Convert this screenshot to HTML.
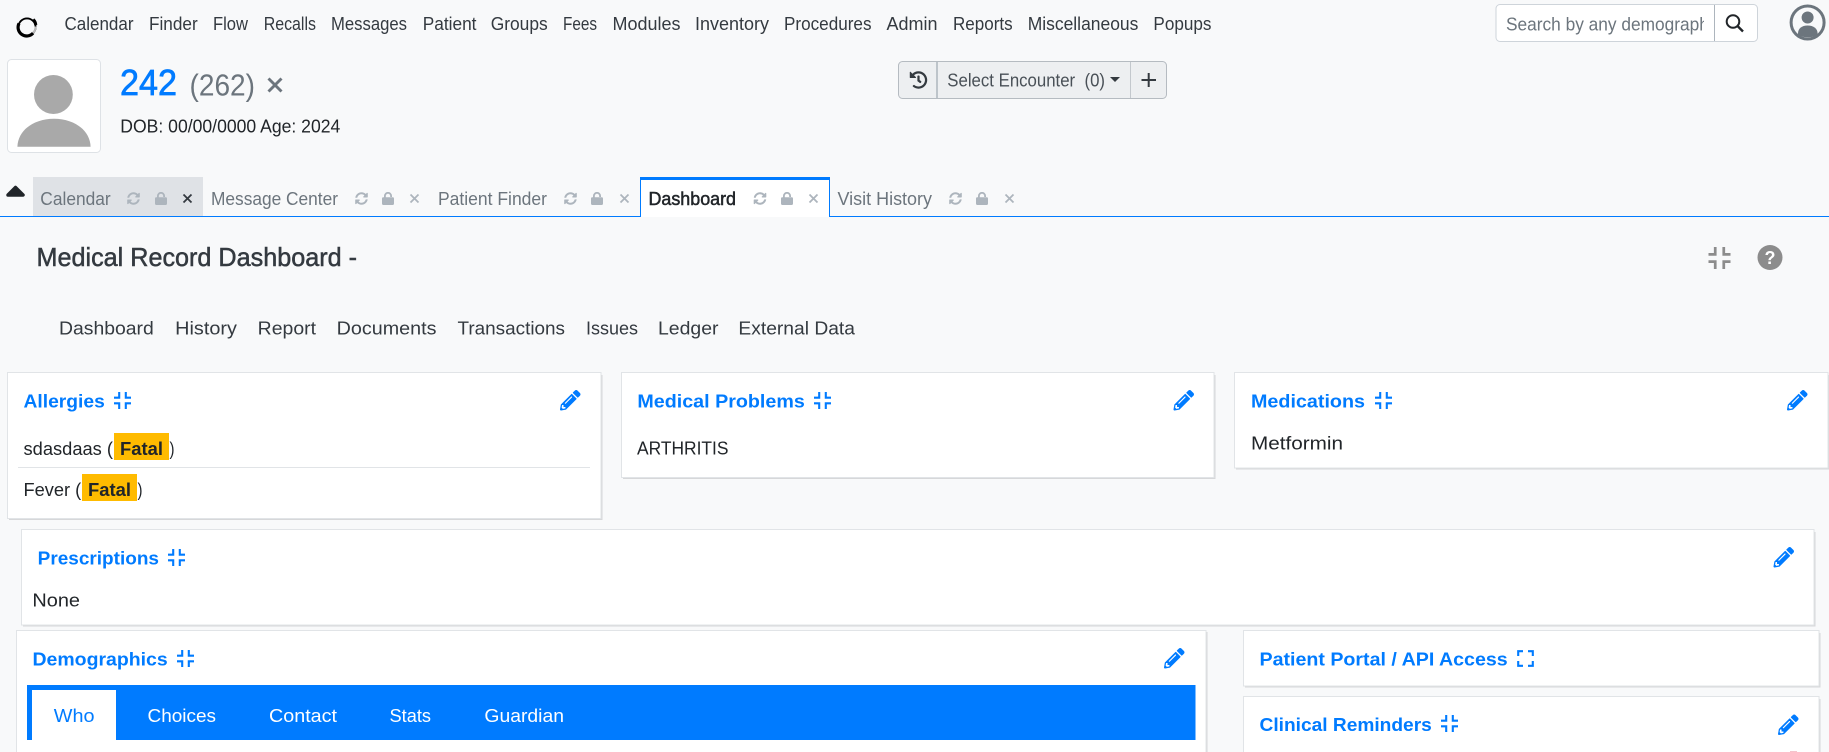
<!DOCTYPE html>
<html lang="en"><head><meta charset="utf-8"><title>Medical Record Dashboard</title>
<style>
html,body{margin:0;padding:0;width:1829px;height:752px;overflow:hidden;background:#f8f9fa}
svg{display:block}
text{font-family:"Liberation Sans",sans-serif;font-size:18.5px;fill:#212529;white-space:pre}
.nav{fill:#343a40}
.tab{fill:#6c757d}
.t{font-weight:bold;fill:#007bff;font-size:18.5px}
.sub{fill:#343a40}
.card{fill:#fff;stroke:#e1e4e7;stroke-width:1}
.sh{fill:#d6d7d9}
.blue{fill:#007bff}
.x{stroke-width:1.8;fill:none;stroke-linecap:butt}
.cmp{fill:none;stroke-width:2.1}
</style></head>
<body>
<svg width="1829" height="752" viewBox="0 0 1829 752" xmlns="http://www.w3.org/2000/svg">
<defs>
<symbol id="pencil" viewBox="0 0 512 512"><path fill="#007bff" d="M497.9 142.1l-46.1 46.1c-4.7 4.7-12.3 4.7-17 0l-111-111c-4.7-4.7-4.7-12.3 0-17l46.1-46.1c18.7-18.7 49.1-18.7 67.9 0l60.1 60.1c18.8 18.7 18.8 49.1 0 67.9zM284.2 99.8L21.6 362.4.4 483.9c-2.9 16.4 11.4 30.6 27.8 27.8l121.5-21.3 262.6-262.6c4.7-4.7 4.7-12.3 0-17l-111-111c-4.8-4.7-12.4-4.7-17.1 0zM124.1 339.9c-5.5-5.5-5.5-14.3 0-19.8l154-154c5.5-5.5 14.3-5.5 19.8 0s5.5 14.3 0 19.8l-154 154c-5.5 5.5-14.3 5.5-19.8 0zM88 424h48v36.3l-64.5 11.3-31.1-31.1L51.7 376H88v48z"/></symbol>
<symbol id="sync" viewBox="0 0 512 512"><path fill="#adb5bd" d="M370.72 133.28C339.458 104.008 298.888 87.962 255.848 88c-77.458.068-144.328 53.178-162.791 126.85-1.344 5.363-6.122 9.15-11.651 9.15H24.103c-7.498 0-13.194-6.807-11.807-14.176C33.933 94.924 134.813 8 256 8c66.448 0 126.791 26.136 171.315 68.685L463.03 40.97C478.149 25.851 504 36.559 504 57.941V192c0 13.255-10.745 24-24 24H345.941c-21.382 0-32.09-25.851-16.971-40.971l41.75-41.749zM32 296h134.059c21.382 0 32.09 25.851 16.971 40.971l-41.75 41.75c31.262 29.273 71.835 45.319 114.876 45.28 77.418-.07 144.315-53.144 162.787-126.849 1.344-5.363 6.122-9.15 11.651-9.15h57.304c7.498 0 13.194 6.807 11.807 14.176C478.067 417.076 377.187 504 256 504c-66.448 0-126.791-26.136-171.315-68.685L48.97 471.03C33.851 486.149 8 475.441 8 454.059V320c0-13.255 10.745-24 24-24z"/></symbol>
<symbol id="lock" viewBox="0 0 12 13"><path fill="#adb5bd" d="M1.200 5.300H10.800A1.200 1.200 0 0 1 12 6.500V11.800A1.200 1.200 0 0 1 10.800 13H1.200A1.200 1.200 0 0 1 0 11.800V6.500A1.200 1.200 0 0 1 1.200 5.300z"/><path d="M2.900 6V3.900a3.100 3.100 0 0 1 6.200 0V5" fill="none" stroke="#adb5bd" stroke-width="1.800"/></symbol>
<symbol id="history" viewBox="0 0 512 512"><path fill="#343a40" d="M504 255.531c.253 136.64-111.18 248.372-247.82 248.468-59.015.042-113.223-20.53-155.822-54.911-11.077-8.94-11.905-25.541-1.839-35.607l11.267-11.267c8.609-8.609 22.353-9.551 31.891-1.984C173.062 425.135 212.781 440 256 440c101.705 0 184-82.311 184-184 0-101.705-82.311-184-184-184-48.814 0-93.149 18.969-126.068 49.932l50.754 50.754c10.08 10.08 2.941 27.314-11.313 27.314H24c-8.837 0-16-7.163-16-16V38.627c0-14.254 17.234-21.393 27.314-11.314l49.372 49.372C129.209 34.136 189.552 8 256 8c136.81 0 247.747 110.78 248 247.531zm-180.912 78.784l9.823-12.63c8.138-10.463 6.253-25.542-4.21-33.679L288 256.349V152c0-13.255-10.745-24-24-24h-16c-13.255 0-24 10.745-24 24v135.651l65.409 50.874c10.463 8.137 25.541 6.253 33.679-4.21z"/></symbol>
<symbol id="cmp" viewBox="0 0 17 17"><path class="cmp" stroke="#007bff" d="M0 5.700H5.200V0M11.800 0V5.700H17M0 11.300H5.200V17M17 11.300H11.800V17"/></symbol>
<symbol id="cmpg" viewBox="0 0 17 17"><path class="cmp" stroke="#8c8c8c" d="M0 5.700H5.200V0M11.800 0V5.700H17M0 11.300H5.200V17M17 11.300H11.800V17"/></symbol>
<symbol id="exp" viewBox="0 0 17 17"><path class="cmp" stroke="#007bff" d="M1.200 6V1.200H6M11 1.200H15.800V6M1.200 11V15.800H6M15.800 11V15.800H11"/></symbol>
<clipPath id="sclip"><rect x="1500" y="5" width="204" height="36"/></clipPath>
</defs>

<!-- logo -->
<circle cx="27" cy="27" r="8.600" fill="none" stroke="#000" stroke-width="1.900"/>
<path d="M19 23.500A8.600 8.600 0 0 0 33 33.200" fill="none" stroke="#000" stroke-width="3.200"/>
<path d="M33.200 19.500A8.600 8.600 0 0 1 35.800 25" fill="none" stroke="#000" stroke-width="3"/>
<path d="M35.500 26.500A8.600 8.600 0 0 1 33 33" fill="none" stroke="#bbb" stroke-width="2"/>

<!-- top nav -->
<g class="navg">
<text class="nav" x="64.500" y="30" textLength="69" lengthAdjust="spacingAndGlyphs">Calendar</text>
<text class="nav" x="149" y="30" textLength="48.700" lengthAdjust="spacingAndGlyphs">Finder</text>
<text class="nav" x="213" y="30" textLength="35" lengthAdjust="spacingAndGlyphs">Flow</text>
<text class="nav" x="263.700" y="30" textLength="52.300" lengthAdjust="spacingAndGlyphs">Recalls</text>
<text class="nav" x="331" y="30" textLength="76" lengthAdjust="spacingAndGlyphs">Messages</text>
<text class="nav" x="422.700" y="30" textLength="53.800" lengthAdjust="spacingAndGlyphs">Patient</text>
<text class="nav" x="490.700" y="30" textLength="57" lengthAdjust="spacingAndGlyphs">Groups</text>
<text class="nav" x="563" y="30" textLength="34" lengthAdjust="spacingAndGlyphs">Fees</text>
<text class="nav" x="612.500" y="30" textLength="68" lengthAdjust="spacingAndGlyphs">Modules</text>
<text class="nav" x="695" y="30" textLength="74" lengthAdjust="spacingAndGlyphs">Inventory</text>
<text class="nav" x="784" y="30" textLength="87.500" lengthAdjust="spacingAndGlyphs">Procedures</text>
<text class="nav" x="886.500" y="30" textLength="51" lengthAdjust="spacingAndGlyphs">Admin</text>
<text class="nav" x="953" y="30" textLength="59.600" lengthAdjust="spacingAndGlyphs">Reports</text>
<text class="nav" x="1027.700" y="30" textLength="110.700" lengthAdjust="spacingAndGlyphs">Miscellaneous</text>
<text class="nav" x="1153.400" y="30" textLength="58.100" lengthAdjust="spacingAndGlyphs">Popups</text>
</g>

<!-- search -->
<rect x="1496" y="4.500" width="261.500" height="37" rx="4" fill="#fff" stroke="#ced4da"/>
<line x1="1714.500" y1="5" x2="1714.500" y2="41" stroke="#adb5bd"/>
<g clip-path="url(#sclip)"><text x="1506" y="30.500" style="fill:#6c757d" textLength="224" lengthAdjust="spacingAndGlyphs">Search by any demographics</text></g>
<circle cx="1733" cy="21.500" r="6.300" fill="none" stroke="#212529" stroke-width="2"/>
<line x1="1737.500" y1="26" x2="1743" y2="31.500" stroke="#212529" stroke-width="2.400"/>

<!-- user -->
<circle cx="1807.600" cy="22.500" r="16.500" fill="none" stroke="#6c757d" stroke-width="3"/>
<circle cx="1807.600" cy="17.500" r="6" fill="#6c757d"/>
<path d="M1798 33.500c0-5 3.800-8 9.600-8s10 3 10 8v1.500c-5.500 3-14 3-19.600 0z" fill="#6c757d"/>

<!-- avatar -->
<rect x="7.500" y="59.500" width="93" height="93" rx="4" fill="#fff" stroke="#dee2e6"/>
<ellipse cx="53.400" cy="94.500" rx="19.400" ry="19.500" fill="#a9a9a9"/>
<path d="M17.400 146.700C18 130 34 118.700 54 118.700s36 11.300 36.600 28z" fill="#a9a9a9"/>

<!-- patient -->
<text x="120" y="95" style="font-size:36px;fill:#007bff;stroke:#007bff;stroke-width:.7" textLength="57" lengthAdjust="spacingAndGlyphs">242</text>
<text x="189.500" y="95.500" style="font-size:31px;fill:#6c757d" textLength="65.500" lengthAdjust="spacingAndGlyphs">(262)</text>
<path d="M268.500 78.500L281.500 91.500M281.500 78.500L268.500 91.500" stroke="#6c757d" stroke-width="2.900" fill="none"/>
<text x="120.300" y="132.500" textLength="220" lengthAdjust="spacingAndGlyphs">DOB: 00/00/0000 Age: 2024</text>

<!-- encounter -->
<rect x="898.500" y="61.500" width="268" height="37" rx="4" fill="#edeff1" stroke="#b5bbc1"/>
<line x1="937" y1="62" x2="937" y2="98" stroke="#adb5bd" stroke-width="1.500"/>
<line x1="1130.500" y1="62" x2="1130.500" y2="98" stroke="#c3c8cd"/>
<use href="#history" x="909.500" y="71" width="18" height="18"/>
<text x="947.300" y="86.500" style="fill:#495057" textLength="157.700" lengthAdjust="spacingAndGlyphs">Select Encounter  (0)</text>
<path d="M1110 77H1120L1115 82z" fill="#343a40"/>
<path d="M1141.500 80H1156M1148.700 73V87" stroke="#343a40" stroke-width="2" fill="none"/>

<!-- tabs -->
<path d="M8 195L15.500 187.500L23 195z" fill="#212529" stroke="#212529" stroke-width="3.500" stroke-linejoin="round"/>
<rect x="33" y="177" width="170" height="39" fill="#dfe2e6"/>
<rect x="640" y="177" width="190" height="40" fill="#fff"/>
<rect x="640" y="177" width="190" height="3" fill="#007bff"/>
<rect x="640" y="177" width="1" height="40" fill="#007bff"/>
<rect x="829" y="177" width="1" height="40" fill="#007bff"/>
<rect x="0" y="216" width="640" height="1" fill="#007bff"/>
<rect x="830" y="216" width="999" height="1" fill="#007bff"/>

<text class="tab" x="40.300" y="205" textLength="70.400" lengthAdjust="spacingAndGlyphs">Calendar</text>
<use href="#sync" x="127" y="192" width="13" height="13"/>
<use href="#lock" x="155" y="192" width="12" height="13"/>
<path class="x" stroke="#343a40" d="M183.500 194.500L191.500 202.500M191.500 194.500L183.500 202.500"/>

<text class="tab" x="211" y="205" textLength="127" lengthAdjust="spacingAndGlyphs">Message Center</text>
<use href="#sync" x="355" y="192" width="13" height="13"/>
<use href="#lock" x="382" y="192" width="12" height="13"/>
<path class="x" stroke="#adb5bd" d="M410.500 194.500L418.500 202.500M418.500 194.500L410.500 202.500"/>

<text class="tab" x="438" y="205" textLength="109" lengthAdjust="spacingAndGlyphs">Patient Finder</text>
<use href="#sync" x="564" y="192" width="13" height="13"/>
<use href="#lock" x="591" y="192" width="12" height="13"/>
<path class="x" stroke="#adb5bd" d="M620.500 194.500L628.500 202.500M628.500 194.500L620.500 202.500"/>

<text x="648.500" y="205" style="stroke:#212529;stroke-width:.5" textLength="87.500" lengthAdjust="spacingAndGlyphs">Dashboard</text>
<use href="#sync" x="753.500" y="192" width="13" height="13"/>
<use href="#lock" x="781" y="192" width="12" height="13"/>
<path class="x" stroke="#adb5bd" d="M809.500 194.500L817.500 202.500M817.500 194.500L809.500 202.500"/>

<text class="tab" x="837.500" y="205" textLength="94.500" lengthAdjust="spacingAndGlyphs">Visit History</text>
<use href="#sync" x="949" y="192" width="13" height="13"/>
<use href="#lock" x="976" y="192" width="12" height="13"/>
<path class="x" stroke="#adb5bd" d="M1005.500 194.500L1013.500 202.500M1013.500 194.500L1005.500 202.500"/>

<!-- title -->
<text x="36.500" y="266" style="font-size:26px;fill:#343a40;stroke:#343a40;stroke-width:.5" textLength="320.500" lengthAdjust="spacingAndGlyphs">Medical Record Dashboard -</text>
<use href="#cmpg" x="1708.500" y="247" width="22" height="22"/>
<circle cx="1770" cy="257.500" r="12.500" fill="#8c8c8c"/>
<text x="1770" y="264" text-anchor="middle" style="font-size:18px;font-weight:bold;fill:#fff">?</text>

<!-- sub nav -->
<text class="sub" x="59" y="334.500" textLength="94.800" lengthAdjust="spacingAndGlyphs">Dashboard</text>
<text class="sub" x="175.200" y="334.500" textLength="61.700" lengthAdjust="spacingAndGlyphs">History</text>
<text class="sub" x="257.700" y="334.500" textLength="58.300" lengthAdjust="spacingAndGlyphs">Report</text>
<text class="sub" x="336.700" y="334.500" textLength="99.800" lengthAdjust="spacingAndGlyphs">Documents</text>
<text class="sub" x="457.500" y="334.500" textLength="107.500" lengthAdjust="spacingAndGlyphs">Transactions</text>
<text class="sub" x="586" y="334.500" textLength="52" lengthAdjust="spacingAndGlyphs">Issues</text>
<text class="sub" x="658" y="334.500" textLength="60.500" lengthAdjust="spacingAndGlyphs">Ledger</text>
<text class="sub" x="738.400" y="334.500" textLength="116.600" lengthAdjust="spacingAndGlyphs">External Data</text>

<!-- allergies -->
<rect class="sh" x="9" y="375" width="593.500" height="145"/>
<rect class="card" x="7.500" y="372.500" width="593.500" height="146"/>
<text class="t" x="23.500" y="407.500" textLength="81.300" lengthAdjust="spacingAndGlyphs">Allergies</text>
<use href="#cmp" x="114" y="392" width="17" height="17"/>
<use href="#pencil" x="560" y="390" width="20.500" height="20.500"/>
<rect x="114" y="433" width="55" height="27" fill="#ffbb00"/>
<rect x="82" y="474" width="55" height="27" fill="#ffbb00"/>
<rect x="18" y="467" width="572" height="1" fill="#e1e4e7"/>
<text x="23.500" y="455" textLength="89.500" lengthAdjust="spacingAndGlyphs">sdasdaas (</text>
<text x="120" y="455" style="font-weight:bold" textLength="43" lengthAdjust="spacingAndGlyphs">Fatal</text>
<text x="169.500" y="455" textLength="5" lengthAdjust="spacingAndGlyphs">)</text>
<text x="23.500" y="496" textLength="57.700" lengthAdjust="spacingAndGlyphs">Fever (</text>
<text x="88" y="496" style="font-weight:bold" textLength="43" lengthAdjust="spacingAndGlyphs">Fatal</text>
<text x="137.500" y="496" textLength="5" lengthAdjust="spacingAndGlyphs">)</text>

<!-- medical problems -->
<rect class="sh" x="623" y="375" width="592.500" height="104"/>
<rect class="card" x="621.500" y="372.500" width="592.500" height="105"/>
<text class="t" x="637.400" y="407.500" textLength="167.400" lengthAdjust="spacingAndGlyphs">Medical Problems</text>
<use href="#cmp" x="814" y="392" width="17" height="17"/>
<use href="#pencil" x="1173.500" y="390" width="20.500" height="20.500"/>
<text x="637" y="454.500" textLength="91.500" lengthAdjust="spacingAndGlyphs">ARTHRITIS</text>

<!-- medications -->
<rect class="sh" x="1236" y="375" width="593" height="94.500"/>
<rect class="card" x="1234.500" y="372.500" width="593.500" height="95.500"/>
<text class="t" x="1251" y="407.500" textLength="114" lengthAdjust="spacingAndGlyphs">Medications</text>
<use href="#cmp" x="1375" y="392" width="17" height="17"/>
<use href="#pencil" x="1787" y="390" width="20.500" height="20.500"/>
<text x="1251" y="449.500" textLength="92" lengthAdjust="spacingAndGlyphs">Metformin</text>

<!-- prescriptions -->
<rect class="sh" x="23" y="532" width="1792.500" height="94.500"/>
<rect class="card" x="21.500" y="529.500" width="1792.500" height="95.500"/>
<text class="t" x="37.700" y="564.500" textLength="121.300" lengthAdjust="spacingAndGlyphs">Prescriptions</text>
<use href="#cmp" x="168" y="549" width="17" height="17"/>
<use href="#pencil" x="1773.500" y="547" width="20.500" height="20.500"/>
<text x="32.400" y="606.500" textLength="47.600" lengthAdjust="spacingAndGlyphs">None</text>

<!-- demographics -->
<rect class="sh" x="18" y="632" width="1189.500" height="130"/>
<rect class="card" x="16.500" y="630.500" width="1189.500" height="130"/>
<text class="t" x="32.500" y="665.500" textLength="135.200" lengthAdjust="spacingAndGlyphs">Demographics</text>
<use href="#cmp" x="177" y="650" width="17" height="17"/>
<use href="#pencil" x="1164" y="648" width="20.500" height="20.500"/>
<rect x="27" y="685" width="1168.500" height="55" fill="#007bff"/>
<rect x="32" y="690" width="84" height="50" fill="#fff"/>
<text x="53.800" y="722" style="fill:#007bff" textLength="40.700" lengthAdjust="spacingAndGlyphs">Who</text>
<text x="147.500" y="722" style="fill:#fff" textLength="68.500" lengthAdjust="spacingAndGlyphs">Choices</text>
<text x="269" y="722" style="fill:#fff" textLength="68" lengthAdjust="spacingAndGlyphs">Contact</text>
<text x="389.500" y="722" style="fill:#fff" textLength="41.500" lengthAdjust="spacingAndGlyphs">Stats</text>
<text x="484.400" y="722" style="fill:#fff" textLength="79.600" lengthAdjust="spacingAndGlyphs">Guardian</text>

<!-- portal -->
<rect class="sh" x="1245" y="633" width="575.500" height="54.500"/>
<rect class="card" x="1243.500" y="630.500" width="575.500" height="55.500"/>
<text class="t" x="1259.500" y="665.500" textLength="248.200" lengthAdjust="spacingAndGlyphs">Patient Portal / API Access</text>
<use href="#exp" x="1517" y="650" width="17" height="17"/>

<!-- reminders -->
<rect class="sh" x="1245" y="699" width="575.500" height="70"/>
<rect class="card" x="1243.500" y="696.500" width="575.500" height="70"/>
<text class="t" x="1259.500" y="731" textLength="172.300" lengthAdjust="spacingAndGlyphs">Clinical Reminders</text>
<use href="#cmp" x="1441" y="715" width="17" height="17"/>
<use href="#pencil" x="1778" y="714.500" width="20.500" height="20.500"/>
<rect x="1790" y="751" width="7" height="1" fill="#f4c4cc"/>
</svg>
</body></html>
